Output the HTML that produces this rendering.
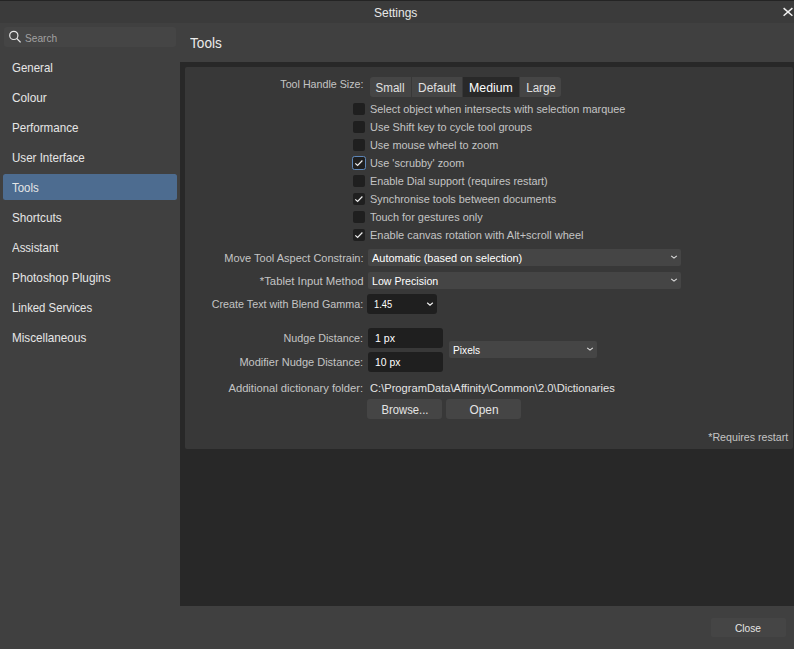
<!DOCTYPE html>
<html lang="en"><head><meta charset="utf-8"><title>Settings</title>
<style>
html,body{margin:0;padding:0}
header,nav,main,footer{display:block;position:static;margin:0;padding:0}
body{width:794px;height:649px;overflow:hidden;background:#404040;position:relative;font-family:"Liberation Sans",sans-serif;color:#ddd}
.b{position:absolute;box-sizing:border-box}
.m{position:absolute;white-space:pre;line-height:20px;height:20px}
svg{position:absolute;overflow:visible}
</style></head><body>
<header>
<div class="b" style="left:0px;top:0px;width:794px;height:23px;background:#3b3b3b;border-radius:0px;"></div>
<div class="b" style="left:0px;top:0px;width:794px;height:1px;background:#242424;border-radius:0px;"></div>
<svg style="left:780px;top:4px" width="14" height="16" viewBox="780 4 14 16"><path d="M783.6 8.1 L792.4 15.8 M792.4 8.1 L783.6 15.8" stroke="#f0f0f0" stroke-width="1.5" fill="none"/></svg>
<span class="m" id="t0" style="top:3px;font-size:13px;color:#e8e8e8;left:374.00px;transform-origin:0 50%;transform:scaleX(0.9234);">Settings</span>
</header>
<nav>
<div class="b" style="left:4px;top:27px;width:172px;height:20px;background:#454545;border-radius:3px;"></div>
<div class="b" style="left:3px;top:174px;width:174px;height:26px;background:#4d6c90;border-radius:2.5px;"></div>
<svg style="left:0;top:22px" width="30" height="30" viewBox="0 22 30 30"><circle cx="13.8" cy="35.4" r="4.1" fill="none" stroke="#e6e6e6" stroke-width="1.2"/><path d="M16.8 38.5 L20.6 42.4" stroke="#e6e6e6" stroke-width="1.25" fill="none"/></svg>
<span class="m" id="t1" style="top:28px;font-size:11px;color:#a2a2a2;left:25.20px;transform-origin:0 50%;transform:scaleX(0.9216);">Search</span>
<span class="m" id="t2" style="top:58px;font-size:13px;color:#e6e6e6;left:12.00px;transform-origin:0 50%;transform:scaleX(0.8831);">General</span>
<span class="m" id="t3" style="top:88px;font-size:13px;color:#e6e6e6;left:12.00px;transform-origin:0 50%;transform:scaleX(0.9085);">Colour</span>
<span class="m" id="t4" style="top:118px;font-size:13px;color:#e6e6e6;left:12.00px;transform-origin:0 50%;transform:scaleX(0.8921);">Performance</span>
<span class="m" id="t5" style="top:148px;font-size:13px;color:#e6e6e6;left:12.00px;transform-origin:0 50%;transform:scaleX(0.8903);">User Interface</span>
<span class="m" id="t6" style="top:178px;font-size:13px;color:#e6e6e6;left:12.00px;transform-origin:0 50%;transform:scaleX(0.8812);">Tools</span>
<span class="m" id="t7" style="top:208px;font-size:13px;color:#e6e6e6;left:12.00px;transform-origin:0 50%;transform:scaleX(0.9022);">Shortcuts</span>
<span class="m" id="t8" style="top:238px;font-size:13px;color:#e6e6e6;left:12.00px;transform-origin:0 50%;transform:scaleX(0.8813);">Assistant</span>
<span class="m" id="t9" style="top:268px;font-size:13px;color:#e6e6e6;left:12.00px;transform-origin:0 50%;transform:scaleX(0.9092);">Photoshop Plugins</span>
<span class="m" id="t10" style="top:298px;font-size:13px;color:#e6e6e6;left:12.00px;transform-origin:0 50%;transform:scaleX(0.8728);">Linked Services</span>
<span class="m" id="t11" style="top:328px;font-size:13px;color:#e6e6e6;left:12.00px;transform-origin:0 50%;transform:scaleX(0.9015);">Miscellaneous</span>
</nav>
<main>
<div class="b" style="left:180px;top:62px;width:614px;height:544px;background:#282828;border-radius:0px;"></div>
<div class="b" style="left:185px;top:67px;width:608px;height:382px;background:#383838;border-radius:2px;"></div>
<div class="b" style="left:370px;top:77px;width:41px;height:20px;background:#454545;border-radius:3px 0 0 3px;"></div>
<div class="b" style="left:412px;top:77px;width:50px;height:20px;background:#454545;border-radius:0px;"></div>
<div class="b" style="left:463px;top:77px;width:56px;height:20px;background:#292929;border-radius:0px;"></div>
<div class="b" style="left:520px;top:77px;width:41px;height:20px;background:#454545;border-radius:0px;border-radius:0 3px 3px 0;"></div>
<div class="b" style="left:353px;top:103px;width:12px;height:12px;background:#1f1f1f;border-radius:2px;"></div>
<div class="b" style="left:353px;top:121px;width:12px;height:12px;background:#1f1f1f;border-radius:2px;"></div>
<div class="b" style="left:353px;top:139px;width:12px;height:12px;background:#1f1f1f;border-radius:2px;"></div>
<div class="b" style="left:353px;top:157px;width:12px;height:12px;background:#1f1f1f;border-radius:2px;"></div>
<div class="b" style="left:352px;top:156px;width:14px;height:14px;border:1px solid #5d86b8;border-radius:2.5px"></div>
<svg style="left:353px;top:157px" width="12" height="12" viewBox="0 0 12 12"><path d="M2.3 6.4 L4.6 8.4 L9.4 3.5" fill="none" stroke="#f0f0f0" stroke-width="1.2"/></svg>
<div class="b" style="left:353px;top:175px;width:12px;height:12px;background:#1f1f1f;border-radius:2px;"></div>
<div class="b" style="left:353px;top:193px;width:12px;height:12px;background:#1f1f1f;border-radius:2px;"></div>
<svg style="left:353px;top:193px" width="12" height="12" viewBox="0 0 12 12"><path d="M2.3 6.4 L4.6 8.4 L9.4 3.5" fill="none" stroke="#f0f0f0" stroke-width="1.2"/></svg>
<div class="b" style="left:353px;top:211px;width:12px;height:12px;background:#1f1f1f;border-radius:2px;"></div>
<div class="b" style="left:353px;top:229px;width:12px;height:12px;background:#1f1f1f;border-radius:2px;"></div>
<svg style="left:353px;top:229px" width="12" height="12" viewBox="0 0 12 12"><path d="M2.3 6.4 L4.6 8.4 L9.4 3.5" fill="none" stroke="#f0f0f0" stroke-width="1.2"/></svg>
<div class="b" style="left:368px;top:249px;width:313px;height:17px;background:#454545;border-radius:2px;"></div>
<svg style="left:670px;top:254.20px" width="8" height="6" viewBox="0 0 8 6"><path d="M1.2 1.90 L4 4.10 L6.8 1.90" fill="none" stroke="#dcdcdc" stroke-width="1.2"/></svg>
<div class="b" style="left:368px;top:272px;width:313px;height:17px;background:#454545;border-radius:2px;"></div>
<svg style="left:670px;top:277.40px" width="8" height="6" viewBox="0 0 8 6"><path d="M1.2 1.90 L4 4.10 L6.8 1.90" fill="none" stroke="#dcdcdc" stroke-width="1.2"/></svg>
<div class="b" style="left:367px;top:294px;width:70px;height:20px;background:#1f1f1f;border-radius:3px;"></div>
<svg style="left:426px;top:300.50px" width="8" height="6" viewBox="0 0 8 6"><path d="M1.2 1.80 L4 4.20 L6.8 1.80" fill="none" stroke="#f0f0f0" stroke-width="1.2"/></svg>
<div class="b" style="left:368px;top:328px;width:75px;height:20px;background:#1f1f1f;border-radius:3px;"></div>
<div class="b" style="left:368px;top:352px;width:75px;height:20px;background:#1f1f1f;border-radius:3px;"></div>
<div class="b" style="left:449px;top:341px;width:148px;height:17px;background:#454545;border-radius:2px;"></div>
<svg style="left:586px;top:346.10px" width="8" height="6" viewBox="0 0 8 6"><path d="M1.2 1.90 L4 4.10 L6.8 1.90" fill="none" stroke="#dcdcdc" stroke-width="1.2"/></svg>
<div class="b" style="left:367px;top:399px;width:75px;height:20px;background:#454545;border-radius:3px;"></div>
<div class="b" style="left:446px;top:399px;width:75px;height:20px;background:#454545;border-radius:3px;"></div>
<span class="m" id="t12" style="top:33px;font-size:14px;color:#ececec;left:190.00px;transform-origin:0 50%;transform:scaleX(0.9727);">Tools</span>
<span class="m" id="t13" style="top:74px;font-size:11.5px;color:#c4c4c4;right:430.46px;transform-origin:100% 50%;transform:scaleX(0.9293);">Tool Handle Size:</span>
<span class="m" id="t14" style="top:99px;font-size:11.5px;color:#c4c4c4;left:370.00px;transform-origin:0 50%;transform:scaleX(0.9467);">Select object when intersects with selection marquee</span>
<span class="m" id="t15" style="top:117px;font-size:11.5px;color:#c4c4c4;left:370.00px;transform-origin:0 50%;transform:scaleX(0.9524);">Use Shift key to cycle tool groups</span>
<span class="m" id="t16" style="top:135px;font-size:11.5px;color:#c4c4c4;left:370.00px;transform-origin:0 50%;transform:scaleX(0.9467);">Use mouse wheel to zoom</span>
<span class="m" id="t17" style="top:153px;font-size:11.5px;color:#c4c4c4;left:370.00px;transform-origin:0 50%;transform:scaleX(0.9461);">Use 'scrubby' zoom</span>
<span class="m" id="t18" style="top:171px;font-size:11.5px;color:#c4c4c4;left:370.00px;transform-origin:0 50%;transform:scaleX(0.9426);">Enable Dial support (requires restart)</span>
<span class="m" id="t19" style="top:189px;font-size:11.5px;color:#c4c4c4;left:370.00px;transform-origin:0 50%;transform:scaleX(0.9452);">Synchronise tools between documents</span>
<span class="m" id="t20" style="top:207px;font-size:11.5px;color:#c4c4c4;left:370.00px;transform-origin:0 50%;transform:scaleX(0.9471);">Touch for gestures only</span>
<span class="m" id="t21" style="top:225px;font-size:11.5px;color:#c4c4c4;left:370.00px;transform-origin:0 50%;transform:scaleX(0.9556);">Enable canvas rotation with Alt+scroll wheel</span>
<span class="m" id="t22" style="top:248px;font-size:11.5px;color:#c4c4c4;right:430.46px;transform-origin:100% 50%;transform:scaleX(0.9566);">Move Tool Aspect Constrain:</span>
<span class="m" id="t23" style="top:271px;font-size:11.5px;color:#c4c4c4;right:430.10px;transform-origin:100% 50%;transform:scaleX(0.9830);">*Tablet Input Method</span>
<span class="m" id="t24" style="top:294px;font-size:11.5px;color:#c4c4c4;right:430.80px;transform-origin:100% 50%;transform:scaleX(0.9334);">Create Text with Blend Gamma:</span>
<span class="m" id="t25" style="top:328px;font-size:11.5px;color:#c4c4c4;right:430.80px;transform-origin:100% 50%;transform:scaleX(0.9358);">Nudge Distance:</span>
<span class="m" id="t26" style="top:352px;font-size:11.5px;color:#c4c4c4;right:430.80px;transform-origin:100% 50%;transform:scaleX(0.9579);">Modifier Nudge Distance:</span>
<span class="m" id="t27" style="top:378px;font-size:11.5px;color:#c4c4c4;right:430.80px;transform-origin:100% 50%;transform:scaleX(0.9753);">Additional dictionary folder:</span>
<span class="m" id="t28" style="top:248px;font-size:11.5px;color:#ffffff;left:372.20px;transform-origin:0 50%;transform:scaleX(0.9517);">Automatic (based on selection)</span>
<span class="m" id="t29" style="top:271px;font-size:11.5px;color:#ffffff;left:372.00px;transform-origin:0 50%;transform:scaleX(0.9250);">Low Precision</span>
<span class="m" id="t30" style="top:294px;font-size:11.5px;color:#ffffff;left:374.00px;transform-origin:0 50%;transform:scaleX(0.8067);">1.45</span>
<span class="m" id="t31" style="top:328px;font-size:11.5px;color:#ffffff;left:374.70px;transform-origin:0 50%;transform:scaleX(0.9205);">1 px</span>
<span class="m" id="t32" style="top:352px;font-size:11.5px;color:#ffffff;left:374.70px;transform-origin:0 50%;transform:scaleX(0.9045);">10 px</span>
<span class="m" id="t33" style="top:340px;font-size:11.5px;color:#ffffff;left:453.00px;transform-origin:0 50%;transform:scaleX(0.8851);">Pixels</span>
<span class="m" id="t34" style="top:378px;font-size:11.5px;color:#e4e4e4;left:370.00px;transform-origin:0 50%;transform:scaleX(0.9680);">C:\ProgramData\Affinity\Common\2.0\Dictionaries</span>
<span class="m" id="t35" style="top:78px;font-size:13px;color:#e0e0e0;left:290.20px;width:200px;text-align:center;transform-origin:50% 50%;transform:scaleX(0.8897);">Small</span>
<span class="m" id="t36" style="top:78px;font-size:13px;color:#e0e0e0;left:336.96px;width:200px;text-align:center;transform-origin:50% 50%;transform:scaleX(0.9169);">Default</span>
<span class="m" id="t37" style="top:78px;font-size:13px;color:#fdfdfd;left:391.20px;width:200px;text-align:center;transform-origin:50% 50%;transform:scaleX(0.9461);">Medium</span>
<span class="m" id="t38" style="top:78px;font-size:13px;color:#e0e0e0;left:440.55px;width:200px;text-align:center;transform-origin:50% 50%;transform:scaleX(0.8913);">Large</span>
<span class="m" id="t39" style="top:400px;font-size:13px;color:#e4e4e4;left:304.50px;width:200px;text-align:center;transform-origin:50% 50%;transform:scaleX(0.8643);">Browse...</span>
<span class="m" id="t40" style="top:400px;font-size:13px;color:#e4e4e4;left:383.95px;width:200px;text-align:center;transform-origin:50% 50%;transform:scaleX(0.9156);">Open</span>
<span class="m" id="t41" style="top:427px;font-size:11.5px;color:#c4c4c4;right:5.30px;transform-origin:100% 50%;transform:scaleX(0.9277);">*Requires restart</span>
</main>
<footer>
<div class="b" style="left:711px;top:618px;width:75px;height:19px;background:#454545;border-radius:2px;"></div>
<span class="m" id="t42" style="top:618px;font-size:11.5px;color:#e4e4e4;left:648.30px;width:200px;text-align:center;transform-origin:50% 50%;transform:scaleX(0.8837);">Close</span>
</footer>
</body></html>
